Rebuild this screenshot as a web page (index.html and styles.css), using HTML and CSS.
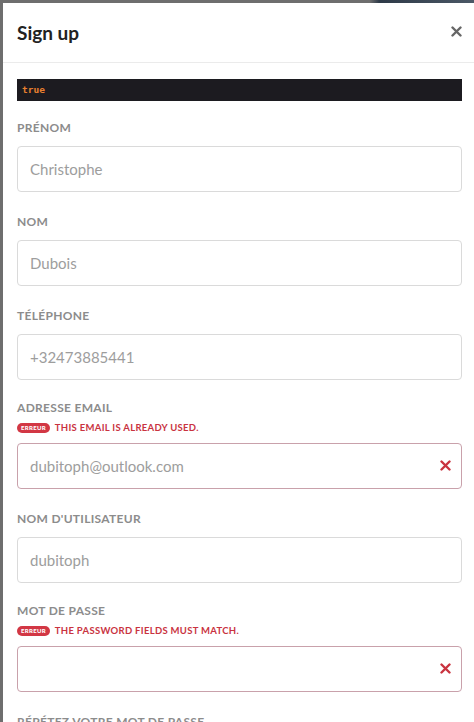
FILE: index.html
```html
<!DOCTYPE html>
<html lang="fr">
  <head>
    <meta charset="UTF-8" />
    <meta name="viewport" content="width=device-width, initial-scale=1.0" />
    <title>Sign up</title>
    <link rel="stylesheet" href="styles.css">
  </head>
  <body>
    <div class="modal">
      <div class="modal-header">
        <h1>Sign up</h1>
        <button class="close" type="button" aria-label="Fermer">
          <svg width="11" height="11" viewBox="0 0 11 11">
            <path d="M1.5 1.5l8 8M9.5 1.5l-8 8" stroke="#666" stroke-width="2.4" stroke-linecap="round" />
          </svg>
        </button>
      </div>

      <div class="modal-body">
        <pre class="debug">true</pre>

        <form action="#" method="post">
          <div class="field">
            <label for="firstname">Prénom</label>
            <input type="text" id="firstname" value="Christophe" />
          </div>

          <div class="field">
            <label for="lastname">Nom</label>
            <input type="text" id="lastname" value="Dubois" />
          </div>

          <div class="field">
            <label for="phone">Téléphone</label>
            <input type="tel" id="phone" value="+32473885441" />
          </div>

          <div class="field has-error">
            <label for="email">Adresse email</label>
            <p class="error"><span class="badge">Erreur</span>This email is already used.</p>
            <div class="input-wrap">
              <input type="email" id="email" value="dubitoph@outlook.com" />
              <svg class="error-icon" width="11" height="11" viewBox="0 0 11 11">
                <path d="M1.5 1.5l8 8M9.5 1.5l-8 8" stroke="#c9333f" stroke-width="2.4" stroke-linecap="round" />
              </svg>
            </div>
          </div>

          <div class="field">
            <label for="username">Nom d'utilisateur</label>
            <input type="text" id="username" value="dubitoph" />
          </div>

          <div class="field has-error">
            <label for="password">Mot de passe</label>
            <p class="error"><span class="badge">Erreur</span>The password fields must match.</p>
            <div class="input-wrap">
              <input type="password" id="password" />
              <svg class="error-icon" width="11" height="11" viewBox="0 0 11 11">
                <path d="M1.5 1.5l8 8M9.5 1.5l-8 8" stroke="#c9333f" stroke-width="2.4" stroke-linecap="round" />
              </svg>
            </div>
          </div>

          <div class="field">
            <label for="password2">Répétez votre mot de passe</label>
            <input type="password" id="password2" />
          </div>
        </form>
      </div>
    </div>
  </body>
</html>
```

FILE: styles.css
```css
* {
  padding: 0;
  margin: 0;
  box-sizing: border-box;
}

body {
  height: 100vh;
  overflow: hidden;
  background: linear-gradient(90deg, #6e6e6e 0%, #6e6e6e 78%, #2e3a48 80%, #4b5866 100%);
  font-family: Lato, "Open Sans", sans-serif;
  padding: 3px 0 0 3px;
}

.modal {
  width: 473px;
  min-height: 100%;
  background-color: #fff;
}

.modal-header {
  display: flex;
  align-items: center;
  justify-content: space-between;
  padding: 16px 14px 16px 14px;
  height: 60px;
  border-bottom: 1px solid #ebebeb;
}

.modal-header h1 {
  font-size: 19px;
  font-weight: 700;
  color: #222;
}

.close {
  display: flex;
  border: none;
  background: none;
  margin-top: -3px;
}

.modal-body {
  padding: 16px 14px 0 14px;
}

.debug {
  height: 22px;
  background-color: #1c1b20;
  color: #e8802f;
  font-family: "DejaVu Sans Mono", monospace;
  font-size: 9.5px;
  font-weight: bold;
  line-height: 22px;
  padding-left: 5px;
  margin-bottom: 19px;
}

.field {
  margin-bottom: 22px;
}

.field.has-error {
  margin-top: -2px;
}

.field label {
  display: block;
  font-size: 12px;
  font-weight: 700;
  line-height: 16px;
  color: #8c8c8c;
  text-transform: uppercase;
  letter-spacing: 0.3px;
  margin-bottom: 10px;
}

.has-error label {
  margin-bottom: 5px;
}

.error {
  display: flex;
  align-items: center;
  gap: 5px;
  font-size: 9.5px;
  font-weight: 700;
  line-height: 14px;
  color: #c9333f;
  text-transform: uppercase;
  letter-spacing: 0.3px;
  margin-bottom: 8px;
}

.badge {
  background-color: #d23744;
  color: #fff;
  font-size: 6px;
  font-weight: 900;
  line-height: 10px;
  padding: 0 4px;
  border-radius: 5px;
  letter-spacing: 0.3px;
}

.field input {
  display: block;
  width: 100%;
  height: 46px;
  border: 1px solid #dadada;
  border-radius: 4px;
  padding: 0 12px;
  font-family: Lato, "Open Sans", sans-serif;
  font-size: 15px;
  color: #9d9d9d;
  background: #fff;
  outline: none;
}

.input-wrap {
  position: relative;
}

.has-error input {
  border-color: #c9a1ab;
}

.error-icon {
  position: absolute;
  right: 11px;
  top: 17px;
}
```
